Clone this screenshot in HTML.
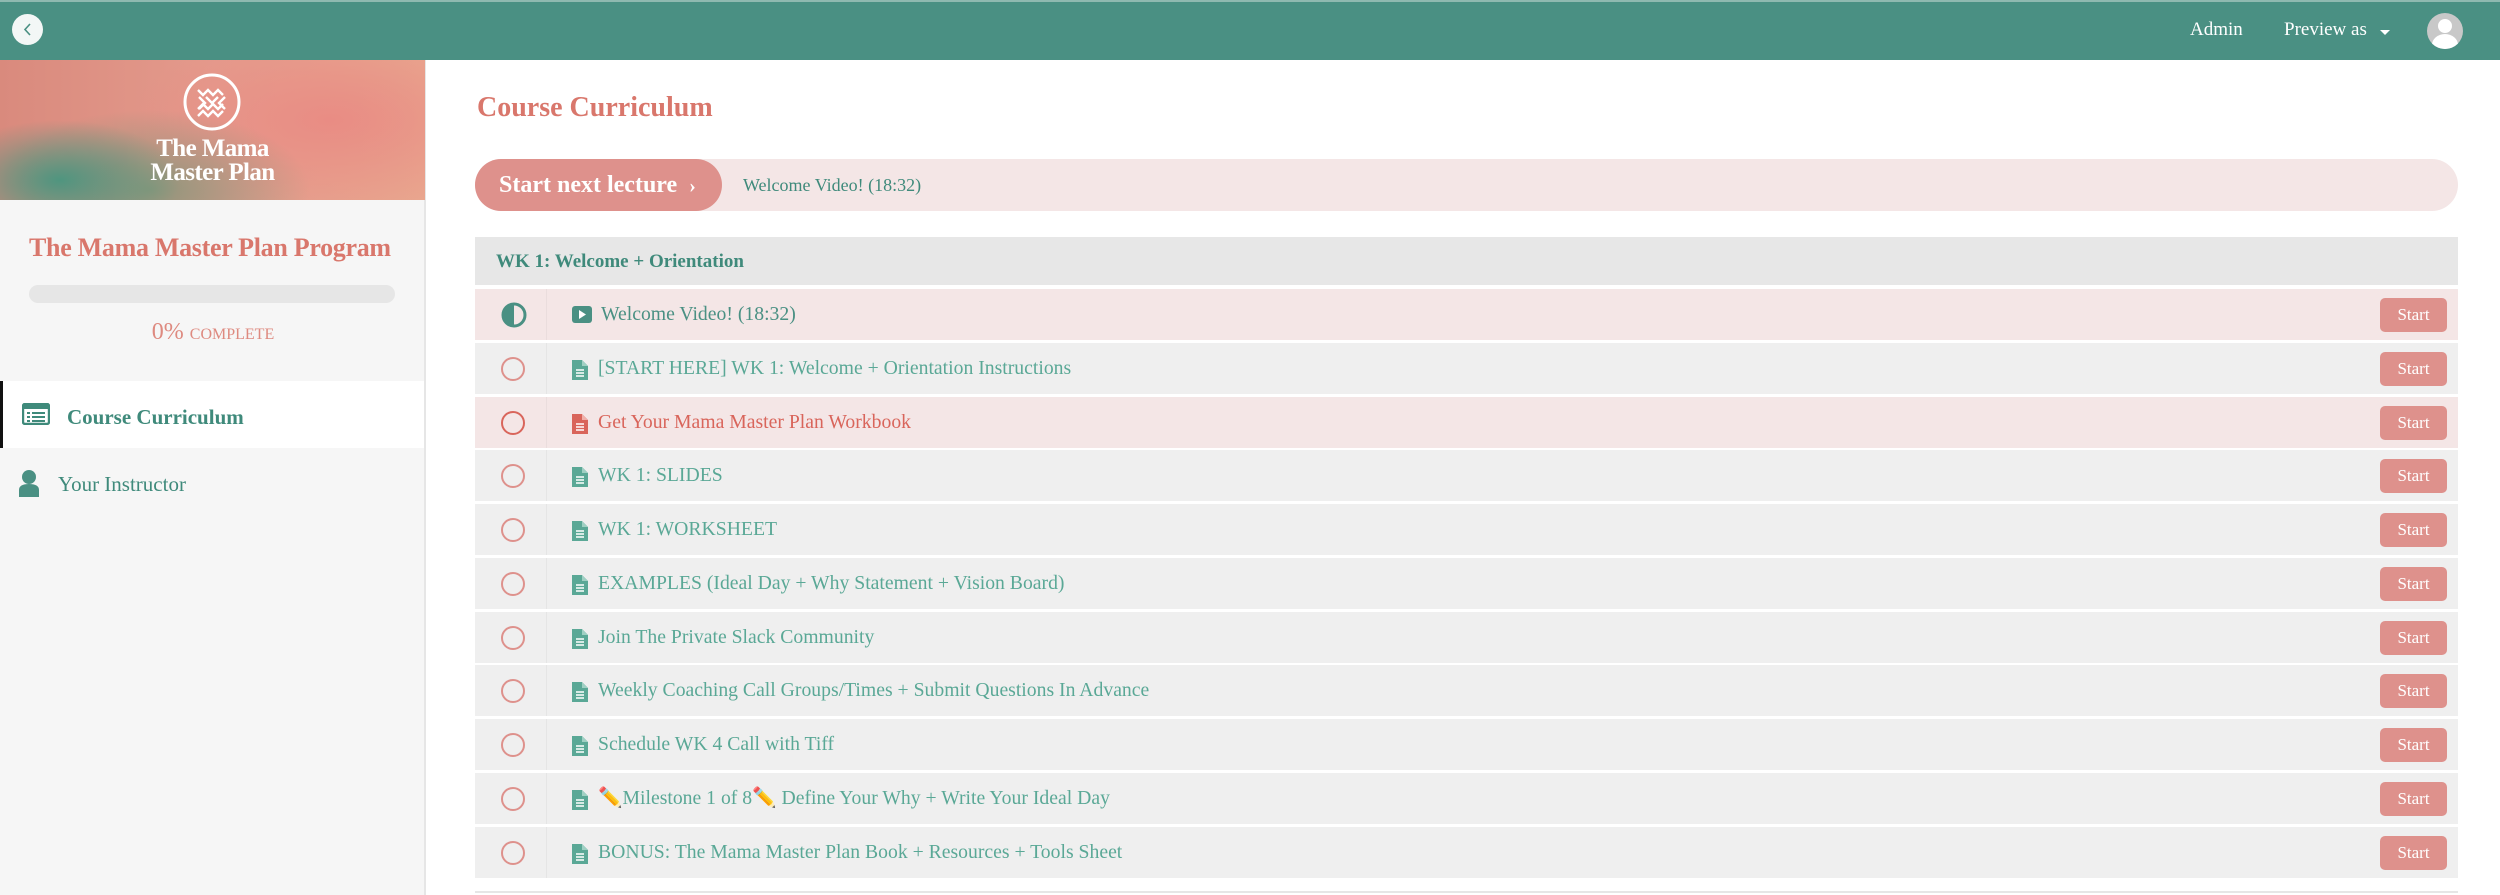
<!DOCTYPE html>
<html><head><meta charset="utf-8"><style>
*{margin:0;padding:0;box-sizing:border-box}
body{width:2500px;height:895px;overflow:hidden;background:#fff;font-family:"Liberation Serif",serif;position:relative}
.top{position:absolute;left:0;top:0;width:2500px;height:60px;background:#4a9083;border-top:2px solid #8fb9b0}
.abs{position:absolute}
.side{position:absolute;left:0;top:60px;width:426px;height:835px;background:#f6f6f6;border-right:2px solid #e6e6e6}
.banner{position:absolute;left:0;top:0;width:425px;height:140px;background:
radial-gradient(ellipse 120px 60px at 60px 120px,#4f957f 0%,rgba(79,149,127,0) 100%),
radial-gradient(ellipse 160px 80px at 150px 130px,rgba(120,150,120,.8) 0%,rgba(120,150,120,0) 100%),
radial-gradient(ellipse 200px 90px at 330px 60px,#e98c84 0%,rgba(233,140,132,0) 100%),
linear-gradient(90deg,#d98a7d,#e49a8c 50%,#e9a68e)}
.row{position:absolute;left:475px;width:1983px;height:51px}
.row .lc{position:absolute;left:0;top:0;width:72px;height:51px;border-right:1px solid rgba(0,0,0,.04)}
.circ{position:absolute;left:26px;top:14px;width:24px;height:24px;border-radius:50%;border:2px solid #de918c}
.txt{position:absolute;left:598px;font-size:19.7px;color:#5aa896;line-height:51px;top:0;white-space:nowrap}
.ico{position:absolute;left:572px;top:17px}
.btn{position:absolute;left:1905px;top:9px;width:67px;height:34px;background:#de918c;border-radius:5px;color:#fff;font-size:17px;text-align:center;line-height:34px}
</style></head><body>
<div class="top">
 <div class="abs" style="left:12px;top:12px;width:31px;height:31px;border-radius:50%;background:#f3f7f6"></div>
 <svg class="abs" style="left:12px;top:12px" width="31" height="31"><path d="M18 10 L13 15.5 L18 21" stroke="#4a9083" stroke-width="1.6" fill="none"/></svg>
 <div class="abs" style="left:2190px;top:17px;color:#fff;font-size:19px">Admin</div>
 <div class="abs" style="left:2284px;top:17px;color:#fff;font-size:19px">Preview as</div>
 <svg class="abs" style="left:2380px;top:28px" width="10" height="6"><path d="M0 0H10L5 5z" fill="#fff"/></svg>
 <div class="abs" style="left:2427px;top:11px;width:36px;height:36px;border-radius:50%;background:#c8c8c8;overflow:hidden">
  <div class="abs" style="left:11px;top:6px;width:14px;height:14px;border-radius:50%;background:#fff"></div>
  <div class="abs" style="left:5px;top:21px;width:26px;height:22px;border-radius:50%;background:#fff"></div>
 </div>
</div>
<div class="side">
 <div class="banner">
  <svg class="abs" style="left:182px;top:13px" width="60" height="60"><circle cx="30" cy="29" r="27" stroke="#fff" stroke-width="3" fill="none"/>
  <path d="M16 17l5 5 5-5 5 5 5-5 5 5 M16 36l5-5 5 5 5-5 5 5 5-5 M17 24l6 6-6 6 M43 24l-6 6 6 6 M24 24l6 6 6-6 M16 43l5-5 5 5 5-5 5 5 5-5" stroke="#fff" stroke-width="2.4" fill="none"/></svg>
  <div class="abs" style="left:0;width:425px;top:77px;text-align:center;color:#fff;font-weight:bold;font-size:25px;line-height:24px;letter-spacing:-.6px">The Mama<br>Master Plan</div>
 </div>
 <div class="abs" style="left:29px;top:173px;color:#d9776c;font-size:26px;font-weight:bold;letter-spacing:-.3px">The Mama Master Plan Program</div>
 <div class="abs" style="left:29px;top:225px;width:366px;height:18px;border-radius:9px;background:#e6e6e6"></div>
 <div class="abs" style="left:0;width:426px;top:259px;text-align:center;color:#de8a80;font-size:24px">0% <span style="font-size:16px">COMPLETE</span></div>
 <div class="abs" style="left:0;top:321px;width:424px;height:67px;background:#fff;border-left:3px solid #111"></div>
 <svg class="abs" style="left:22px;top:343px" width="28" height="22"><rect x="1" y="1" width="26" height="20" rx="2" fill="none" stroke="#3f8a7b" stroke-width="2.4"/><rect x="1" y="1" width="26" height="5" fill="#3f8a7b"/><path d="M5 10h3M10 10h13M5 14h3M10 14h13M5 18h3M10 18h13" stroke="#3f8a7b" stroke-width="2"/></svg>
 <div class="abs" style="left:67px;top:345px;color:#3f8a7b;font-size:21px;font-weight:bold">Course Curriculum</div>
 <svg class="abs" style="left:18px;top:409px" width="22" height="28"><circle cx="11" cy="8" r="7" fill="#4a9083"/><path d="M1 28v-7q0-6 10-6t10 6v7z" fill="#4a9083"/></svg>
 <div class="abs" style="left:58px;top:412px;color:#3f8a7b;font-size:21px">Your Instructor</div>
</div>
<div class="abs" style="left:477px;top:92px;color:#d9776c;font-size:28px;font-weight:bold">Course Curriculum</div>
<div class="abs" style="left:475px;top:159px;width:1983px;height:52px;border-radius:26px;background:#f4e6e6"></div>
<div class="abs" style="left:475px;top:159px;width:247px;height:52px;border-radius:26px;background:#de918c;color:#fff;font-size:24px;font-weight:bold;line-height:52px;padding-left:24px">Start next lecture <span style="font-size:20px;margin-left:6px">›</span></div>
<div class="abs" style="left:743px;top:159px;line-height:52px;color:#3f8a7b;font-size:18px">Welcome Video! (18:32)</div>
<div class="abs" style="left:475px;top:237px;width:1983px;height:48px;background:#e7e7e7"></div>
<div class="abs" style="left:496px;top:238px;line-height:48px;color:#3f8a7b;font-size:19px;font-weight:bold">WK 1: Welcome + Orientation</div>
<div class="abs" style="left:475px;top:891px;width:1983px;height:2px;background:#e6e6e6"></div>
<div class="row" style="top:289px;background:#f4e6e6"><div class="lc"></div>
<svg class="abs" style="left:26px;top:13px" width="26" height="26"><circle cx="13" cy="13" r="11" fill="none" stroke="#4a9083" stroke-width="3"/><path d="M13 2a11 11 0 0 0 0 22z" fill="#4a9083"/></svg>
<svg class="abs" style="left:97px;top:17px" width="20" height="17"><rect x="0" y="0" width="20" height="17" rx="3" fill="#4a9083"/><path d="M7 4l7 4.5-7 4.5z" fill="#fff"/></svg>
<div class="txt" style="left:126px;color:#4a9083">Welcome Video! (18:32)</div><div class="btn">Start</div></div>
<div class="row" style="top:343px;background:#efefef"><div class="lc"></div><div class="circ"></div><svg class="ico" style="left:97px" width="16" height="20"><path d="M0 0h10l6 6v14H0z" fill="#5aa896"/><path d="M10 0v6h6" fill="#9fd0c3"/><path d="M4 10h8M4 13h8M4 16h8" stroke="#fff" stroke-width="1.4"/></svg><div class="txt" style="left:123px">[START HERE] WK 1: Welcome + Orientation Instructions</div><div class="btn">Start</div></div>
<div class="row" style="top:397px;background:#f4e6e6"><div class="lc"></div><div class="circ" style="border-color:#d9655b"></div><svg class="ico" style="left:97px" width="16" height="20"><path d="M0 0h10l6 6v14H0z" fill="#d9655b"/><path d="M10 0v6h6" fill="#f0b0aa"/><path d="M4 10h8M4 13h8M4 16h8" stroke="#fff" stroke-width="1.4"/></svg><div class="txt" style="left:123px;color:#d9655b">Get Your Mama Master Plan Workbook</div><div class="btn">Start</div></div>
<div class="row" style="top:450px;background:#efefef"><div class="lc"></div><div class="circ"></div><svg class="ico" style="left:97px" width="16" height="20"><path d="M0 0h10l6 6v14H0z" fill="#5aa896"/><path d="M10 0v6h6" fill="#9fd0c3"/><path d="M4 10h8M4 13h8M4 16h8" stroke="#fff" stroke-width="1.4"/></svg><div class="txt" style="left:123px">WK 1: SLIDES</div><div class="btn">Start</div></div>
<div class="row" style="top:504px;background:#efefef"><div class="lc"></div><div class="circ"></div><svg class="ico" style="left:97px" width="16" height="20"><path d="M0 0h10l6 6v14H0z" fill="#5aa896"/><path d="M10 0v6h6" fill="#9fd0c3"/><path d="M4 10h8M4 13h8M4 16h8" stroke="#fff" stroke-width="1.4"/></svg><div class="txt" style="left:123px">WK 1: WORKSHEET</div><div class="btn">Start</div></div>
<div class="row" style="top:558px;background:#efefef"><div class="lc"></div><div class="circ"></div><svg class="ico" style="left:97px" width="16" height="20"><path d="M0 0h10l6 6v14H0z" fill="#5aa896"/><path d="M10 0v6h6" fill="#9fd0c3"/><path d="M4 10h8M4 13h8M4 16h8" stroke="#fff" stroke-width="1.4"/></svg><div class="txt" style="left:123px">EXAMPLES (Ideal Day + Why Statement + Vision Board)</div><div class="btn">Start</div></div>
<div class="row" style="top:612px;background:#efefef"><div class="lc"></div><div class="circ"></div><svg class="ico" style="left:97px" width="16" height="20"><path d="M0 0h10l6 6v14H0z" fill="#5aa896"/><path d="M10 0v6h6" fill="#9fd0c3"/><path d="M4 10h8M4 13h8M4 16h8" stroke="#fff" stroke-width="1.4"/></svg><div class="txt" style="left:123px">Join The Private Slack Community</div><div class="btn">Start</div></div>
<div class="row" style="top:665px;background:#efefef"><div class="lc"></div><div class="circ"></div><svg class="ico" style="left:97px" width="16" height="20"><path d="M0 0h10l6 6v14H0z" fill="#5aa896"/><path d="M10 0v6h6" fill="#9fd0c3"/><path d="M4 10h8M4 13h8M4 16h8" stroke="#fff" stroke-width="1.4"/></svg><div class="txt" style="left:123px">Weekly Coaching Call Groups/Times + Submit Questions In Advance</div><div class="btn">Start</div></div>
<div class="row" style="top:719px;background:#efefef"><div class="lc"></div><div class="circ"></div><svg class="ico" style="left:97px" width="16" height="20"><path d="M0 0h10l6 6v14H0z" fill="#5aa896"/><path d="M10 0v6h6" fill="#9fd0c3"/><path d="M4 10h8M4 13h8M4 16h8" stroke="#fff" stroke-width="1.4"/></svg><div class="txt" style="left:123px">Schedule WK 4 Call with Tiff</div><div class="btn">Start</div></div>
<div class="row" style="top:773px;background:#efefef"><div class="lc"></div><div class="circ"></div><svg class="ico" style="left:97px" width="16" height="20"><path d="M0 0h10l6 6v14H0z" fill="#5aa896"/><path d="M10 0v6h6" fill="#9fd0c3"/><path d="M4 10h8M4 13h8M4 16h8" stroke="#fff" stroke-width="1.4"/></svg><div class="txt" style="left:123px">✏️Milestone 1 of 8✏️ Define Your Why + Write Your Ideal Day</div><div class="btn">Start</div></div>
<div class="row" style="top:827px;background:#efefef"><div class="lc"></div><div class="circ"></div><svg class="ico" style="left:97px" width="16" height="20"><path d="M0 0h10l6 6v14H0z" fill="#5aa896"/><path d="M10 0v6h6" fill="#9fd0c3"/><path d="M4 10h8M4 13h8M4 16h8" stroke="#fff" stroke-width="1.4"/></svg><div class="txt" style="left:123px">BONUS: The Mama Master Plan Book + Resources + Tools Sheet</div><div class="btn">Start</div></div>
</body></html>
